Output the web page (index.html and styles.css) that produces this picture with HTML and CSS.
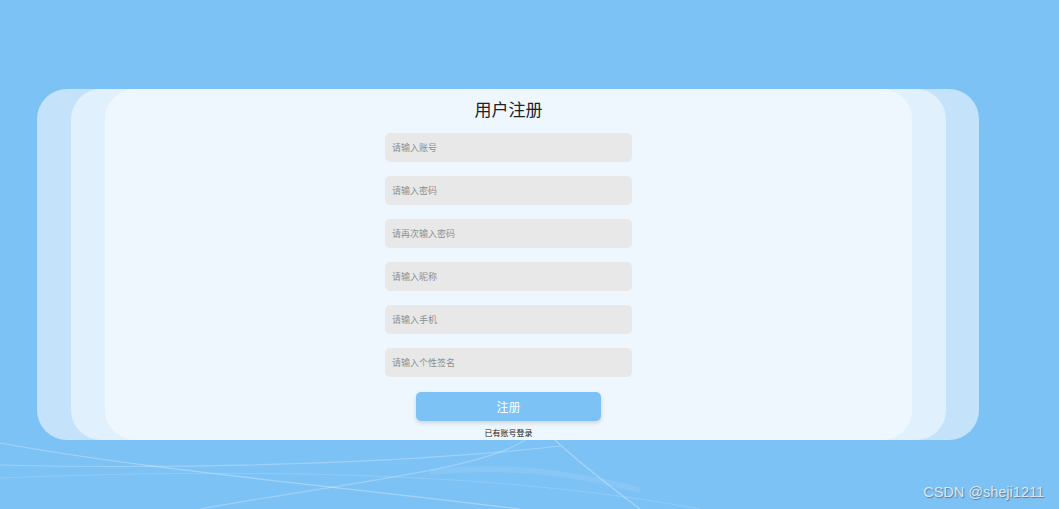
FILE: index.html
```html
<!DOCTYPE html>
<html lang="zh">
<head>
    <meta charset="UTF-8">
    <meta name="viewport" content="width=device-width, initial-scale=1.0">
    <title>用户注册</title>
    <link rel="stylesheet" href="styles.css">
</head>
<body>

    <!-- 背景曲线 -->
    <svg class="waves" width="1059" height="509" viewBox="0 0 1059 509">
        <path d="M0 443 C 150 470, 300 482, 520 509" stroke="rgba(255,255,255,0.3)" stroke-width="1.2" fill="none"/>
        <path d="M0 465 C 200 470, 420 462, 560 446" stroke="rgba(255,255,255,0.25)" stroke-width="1.2" fill="none"/>
        <path d="M0 478 C 250 468, 500 472, 700 509" stroke="rgba(255,255,255,0.15)" stroke-width="1" fill="none"/>
        <path d="M200 509 C 350 482, 480 470, 525 440" stroke="rgba(255,255,255,0.25)" stroke-width="1.2" fill="none"/>
        <path d="M555 440 C 585 468, 615 490, 640 509" stroke="rgba(255,255,255,0.3)" stroke-width="1.2" fill="none"/>
        <path d="M430 472 C 500 465, 560 470, 640 490" stroke="rgba(255,255,255,0.08)" stroke-width="6" fill="none"/>
    </svg>

    <!-- 注册卡片 -->
    <div class="card-back">
        <div class="card-mid">
            <div class="card-front">
                <h1 class="title">用户注册</h1>
                <input class="input-field" type="text" placeholder="请输入账号">
                <input class="input-field" type="password" placeholder="请输入密码">
                <input class="input-field" type="password" placeholder="请再次输入密码">
                <input class="input-field" type="text" placeholder="请输入昵称">
                <input class="input-field" type="text" placeholder="请输入手机">
                <input class="input-field" type="text" placeholder="请输入个性签名">
                <button class="register-btn">注册</button>
                <a class="login-link">已有账号登录</a>
            </div>
        </div>
    </div>

    <div class="watermark">CSDN @sheji1211</div>

</body>
</html>
```

FILE: styles.css
```css
body {
    font-family: "Noto Sans CJK SC", "Noto Sans", sans-serif;
    margin: 0;
    padding: 0;
    background-color: #7dc2f5;
    width: 1059px;
    height: 509px;
    overflow: hidden;
    position: relative;
}

.waves {
    position: absolute;
    left: 0;
    top: 0;
}

.card-back {
    position: relative;
    margin: 89px 0 0 37px;
    width: 942px;
    height: 351px;
    box-sizing: border-box;
    padding: 0 33px 0 34px;
    background-color: #c4e2fa;
    border-radius: 30px;
}

.card-mid {
    height: 100%;
    box-sizing: border-box;
    padding: 0 34px;
    background-color: #e0f0fc;
    border-radius: 30px;
}

.card-front {
    height: 100%;
    display: flex;
    flex-direction: column;
    align-items: center;
    background-color: #eff7fe;
    border-radius: 30px;
}

.title {
    margin: 8px 0 12px 0;
    font-size: 17px;
    font-weight: normal;
    line-height: 24px;
    color: #222;
}

.input-field {
    width: 247px;
    height: 29px;
    box-sizing: border-box;
    margin-bottom: 14px;
    padding: 0 7px;
    border: none;
    border-radius: 5px;
    background-color: #e8e8e8;
    font-family: inherit;
    font-size: 9px;
    color: #333;
    outline: none;
}

.input-field::placeholder {
    color: #8f8f8f;
}

.register-btn {
    margin-top: 1px;
    width: 185px;
    height: 29px;
    border: none;
    border-radius: 5px;
    background-color: #7dc2f5;
    color: white;
    font-family: inherit;
    font-size: 12px;
    box-shadow: 0 2px 4px rgba(0, 0, 0, 0.15);
    cursor: pointer;
}

.login-link {
    margin-top: 6px;
    font-size: 8px;
    line-height: 12px;
    color: #222;
    cursor: pointer;
}

.watermark {
    position: absolute;
    right: 15px;
    bottom: 9px;
    font-family: "Liberation Sans", Arial, sans-serif;
    font-size: 14.5px;
    color: #dde6ee;
    text-shadow: 1px 1px 1px rgba(60, 80, 100, 0.6);
}
```
